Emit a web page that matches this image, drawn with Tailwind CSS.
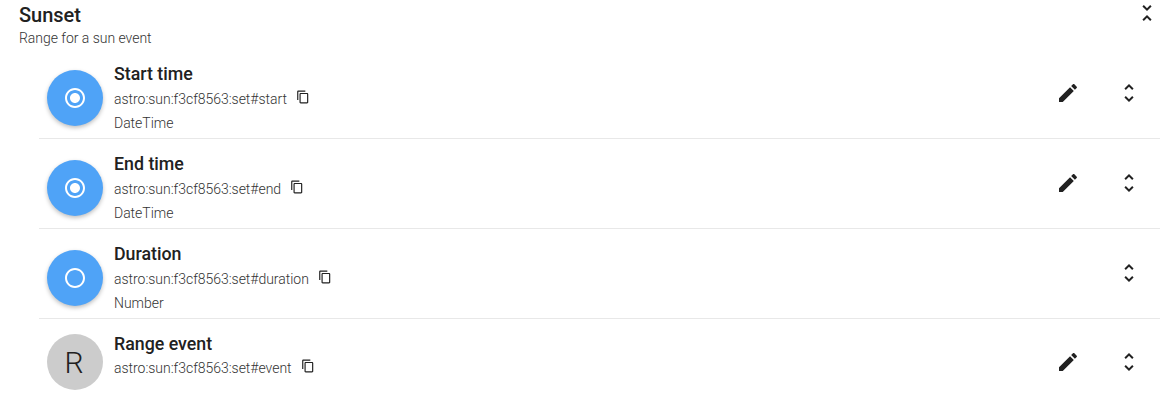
<!DOCTYPE html>
<html lang="en">
<head>
  <meta charset="UTF-8">
  <title>Sunset</title>
  <script src="https://cdn.jsdelivr.net/npm/@tailwindcss/browser@4"></script>
</head>
<body class="bg-white h-[401px] overflow-hidden font-['Roboto',sans-serif] text-[#212121]">

  <!-- Header -->
  <div class="flex justify-between pl-[19px] pr-[3px] h-[49px]">
    <div>
      <h1 class="text-[20px] leading-[24px] font-medium mt-[3px] tracking-[-0.02px]">Sunset</h1>
      <p class="text-[14px] leading-[20px] font-light mt-[1px] text-[#333333] tracking-[-0.03px]">Range for a sun event</p>
    </div>
    <button class="w-[24px] h-[24px] mr-[1px] mt-[1px]">
      <svg viewBox="0 0 24 24" class="w-[24px] h-[24px]" fill="#212121"><path d="M16.59 5.41 15.17 4 12 7.17 8.83 4 7.41 5.41 12 10z M7.41 18.59 8.83 20 12 16.83 15.17 20l1.41-1.41L12 14z"/></svg>
    </button>
  </div>

  <!-- Rows -->
  <div class="ml-[39px] mr-[3px]">

    <div class="flex h-[90px] pt-[21px] border-b border-[#e8e8e8]">
      <div class="w-[56px] h-[56px] ml-[8px] rounded-full bg-[#4fa3f7] shadow-[0_2px_4px_rgba(0,0,0,0.25)] flex items-center justify-center">
        <svg viewBox="0 0 24 24" class="w-[24px] h-[24px]" fill="#fff"><path d="M12 7c-2.76 0-5 2.24-5 5s2.24 5 5 5 5-2.240 5-5-2.240-5-5-5zm0-5C6.480 2 2 6.480 2 12s4.480 10 10 10 10-4.480 10-10S17.520 2 12 2zm0 18c-4.420 0-8-3.580-8-8s3.580-8 8-8 8 3.580 8 8-3.580 8-8 8z"/></svg>
      </div>
      <div class="ml-[11px] flex-1 -mt-[8px]">
        <div class="text-[17.8px] leading-[24px] font-medium">Start time</div>
        <div class="flex items-center text-[14px] leading-[24px] font-light mt-[1px] text-[#333333]">
          <span class="tracking-[-0.03px]">astro:sun:f3cf8563:set#start</span>
          <svg viewBox="0 0 24 24" class="w-[14px] h-[14px] ml-[9px] -mt-[5px]" fill="#212121"><path d="M16 1H4c-1.100 0-2 .900-2 2v14h2V3h12V1zm3 4H8c-1.100 0-2 .900-2 2v14c0 1.100.900 2 2 2h11c1.100 0 2-.900 2-2V7c0-1.100-.900-2-2-2zm0 16H8V7h11v14z"/></svg>
        </div>
        <div class="text-[14px] leading-[20px] font-light mt-[2px] text-[#333333] tracking-[-0.03px]">DateTime</div>
      </div>
      <button class="w-[24px] h-[24px] mt-[11px] mr-[37px]">
        <svg viewBox="0 0 24 24" class="w-[24px] h-[24px]" fill="#212121"><path d="M3 17.250V21h3.750L17.810 9.940l-3.750-3.750L3 17.250zM20.710 7.040c.390-.390.390-1.020 0-1.410l-2.340-2.340c-.390-.390-1.020-.390-1.410 0l-1.830 1.830 3.750 3.750 1.830-1.830z"/></svg>
      </button>
      <button class="w-[24px] h-[24px] mt-[11px] mr-[19px]">
        <svg viewBox="0 0 24 24" class="w-[24px] h-[24px]" fill="#212121"><path d="M12 5.830 15.170 9l1.410-1.410L12 3 7.410 7.590 8.830 9 12 5.830zm0 12.340L8.830 15l-1.410 1.410L12 21l4.590-4.590L15.170 15 12 18.170z"/></svg>
      </button>
    </div>

    <div class="flex h-[90px] pt-[21px] border-b border-[#e8e8e8]">
      <div class="w-[56px] h-[56px] ml-[8px] rounded-full bg-[#4fa3f7] shadow-[0_2px_4px_rgba(0,0,0,0.25)] flex items-center justify-center">
        <svg viewBox="0 0 24 24" class="w-[24px] h-[24px]" fill="#fff"><path d="M12 7c-2.76 0-5 2.24-5 5s2.24 5 5 5 5-2.240 5-5-2.240-5-5-5zm0-5C6.480 2 2 6.480 2 12s4.480 10 10 10 10-4.480 10-10S17.520 2 12 2zm0 18c-4.420 0-8-3.580-8-8s3.580-8 8-8 8 3.580 8 8-3.580 8-8 8z"/></svg>
      </div>
      <div class="ml-[11px] flex-1 -mt-[8px]">
        <div class="text-[17.8px] leading-[24px] font-medium">End time</div>
        <div class="flex items-center text-[14px] leading-[24px] font-light mt-[1px] text-[#333333]">
          <span class="tracking-[-0.03px]">astro:sun:f3cf8563:set#end</span>
          <svg viewBox="0 0 24 24" class="w-[14px] h-[14px] ml-[9px] -mt-[5px]" fill="#212121"><path d="M16 1H4c-1.100 0-2 .900-2 2v14h2V3h12V1zm3 4H8c-1.100 0-2 .900-2 2v14c0 1.100.900 2 2 2h11c1.100 0 2-.900 2-2V7c0-1.100-.900-2-2-2zm0 16H8V7h11v14z"/></svg>
        </div>
        <div class="text-[14px] leading-[20px] font-light mt-[2px] text-[#333333] tracking-[-0.03px]">DateTime</div>
      </div>
      <button class="w-[24px] h-[24px] mt-[11px] mr-[37px]">
        <svg viewBox="0 0 24 24" class="w-[24px] h-[24px]" fill="#212121"><path d="M3 17.250V21h3.750L17.810 9.940l-3.750-3.750L3 17.250zM20.710 7.040c.390-.390.390-1.020 0-1.410l-2.340-2.340c-.390-.390-1.020-.390-1.410 0l-1.830 1.830 3.750 3.750 1.830-1.830z"/></svg>
      </button>
      <button class="w-[24px] h-[24px] mt-[11px] mr-[19px]">
        <svg viewBox="0 0 24 24" class="w-[24px] h-[24px]" fill="#212121"><path d="M12 5.830 15.170 9l1.410-1.410L12 3 7.410 7.590 8.830 9 12 5.830zm0 12.340L8.830 15l-1.410 1.410L12 21l4.590-4.590L15.170 15 12 18.170z"/></svg>
      </button>
    </div>

    <div class="flex h-[90px] pt-[21px] border-b border-[#e8e8e8]">
      <div class="w-[56px] h-[56px] ml-[8px] rounded-full bg-[#4fa3f7] shadow-[0_2px_4px_rgba(0,0,0,0.25)] flex items-center justify-center">
        <svg viewBox="0 0 24 24" class="w-[24px] h-[24px]" fill="#fff"><path d="M12 2C6.480 2 2 6.480 2 12s4.480 10 10 10 10-4.480 10-10S17.520 2 12 2zm0 18c-4.420 0-8-3.580-8-8s3.580-8 8-8 8 3.580 8 8-3.580 8-8 8z"/></svg>
      </div>
      <div class="ml-[11px] flex-1 -mt-[8px]">
        <div class="text-[17.8px] leading-[24px] font-medium">Duration</div>
        <div class="flex items-center text-[14px] leading-[24px] font-light mt-[1px] text-[#333333]">
          <span class="tracking-[-0.03px]">astro:sun:f3cf8563:set#duration</span>
          <svg viewBox="0 0 24 24" class="w-[14px] h-[14px] ml-[9px] -mt-[5px]" fill="#212121"><path d="M16 1H4c-1.100 0-2 .900-2 2v14h2V3h12V1zm3 4H8c-1.100 0-2 .900-2 2v14c0 1.100.900 2 2 2h11c1.100 0 2-.900 2-2V7c0-1.100-.900-2-2-2zm0 16H8V7h11v14z"/></svg>
        </div>
        <div class="text-[14px] leading-[20px] font-light mt-[2px] text-[#333333] tracking-[-0.03px]">Number</div>
      </div>
      <button class="w-[24px] h-[24px] mt-[11px] mr-[19px]">
        <svg viewBox="0 0 24 24" class="w-[24px] h-[24px]" fill="#212121"><path d="M12 5.830 15.170 9l1.410-1.410L12 3 7.410 7.590 8.830 9 12 5.830zm0 12.340L8.830 15l-1.410 1.410L12 21l4.590-4.590L15.170 15 12 18.170z"/></svg>
      </button>
    </div>

    <div class="flex pt-[15px]">
      <div class="w-[56px] h-[56px] ml-[8px] rounded-full bg-[#cccccc] flex items-center justify-center text-[30px] font-light pr-[2px]">R</div>
      <div class="ml-[11px] flex-1 -mt-[3px]">
        <div class="text-[17.8px] leading-[24px] font-medium mt-[1px]">Range event</div>
        <div class="flex items-center text-[14px] leading-[24px] font-light text-[#333333]">
          <span class="tracking-[-0.03px]">astro:sun:f3cf8563:set#event</span>
          <svg viewBox="0 0 24 24" class="w-[14px] h-[14px] ml-[9px] -mt-[5px]" fill="#212121"><path d="M16 1H4c-1.100 0-2 .900-2 2v14h2V3h12V1zm3 4H8c-1.100 0-2 .900-2 2v14c0 1.100.900 2 2 2h11c1.100 0 2-.900 2-2V7c0-1.100-.900-2-2-2zm0 16H8V7h11v14z"/></svg>
        </div>
      </div>
      <button class="w-[24px] h-[24px] mt-[16px] mr-[37px]">
        <svg viewBox="0 0 24 24" class="w-[24px] h-[24px]" fill="#212121"><path d="M3 17.250V21h3.750L17.810 9.940l-3.750-3.750L3 17.250zM20.710 7.040c.390-.390.390-1.020 0-1.410l-2.340-2.340c-.390-.390-1.020-.390-1.410 0l-1.830 1.830 3.750 3.750 1.830-1.830z"/></svg>
      </button>
      <button class="w-[24px] h-[24px] mt-[16px] mr-[19px]">
        <svg viewBox="0 0 24 24" class="w-[24px] h-[24px]" fill="#212121"><path d="M12 5.830 15.170 9l1.410-1.410L12 3 7.410 7.590 8.830 9 12 5.830zm0 12.340L8.830 15l-1.410 1.410L12 21l4.590-4.590L15.170 15 12 18.170z"/></svg>
      </button>
    </div>

  </div>
</body>
</html>
